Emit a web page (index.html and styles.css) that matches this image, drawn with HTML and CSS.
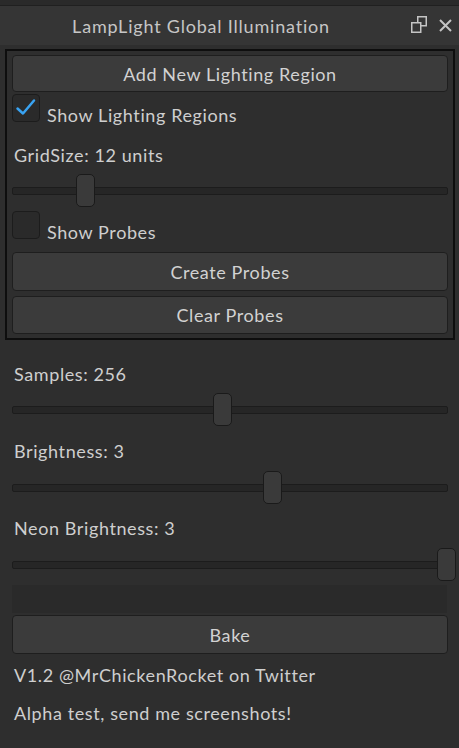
FILE: index.html
```html
<!DOCTYPE html>
<html>
<head>
<meta charset="utf-8">
<link rel="stylesheet" href="styles.css">
</head>
<body>
<div class="topstrip"></div>
<div class="titlebar">
  <div class="title">LampLight Global Illumination</div>
  <div class="icons">
    <svg class="ico-restore" width="16" height="18" viewBox="0 0 16 18">
      <rect x="6.75" y="0.75" width="8.5" height="9" fill="none" stroke="#c4c4c4" stroke-width="1.5"/>
      <rect x="0.75" y="6.75" width="9" height="9.5" fill="#353535" stroke="#c4c4c4" stroke-width="1.5"/>
    </svg>
    <svg class="ico-close" width="13" height="13" viewBox="0 0 13 13">
      <path d="M1 1 L12 12 M12 1 L1 12" stroke="#c4c4c4" stroke-width="2"/>
    </svg>
  </div>
</div>
<div class="content">
  <div class="box">
    <div class="btn btn-add">Add New Lighting Region</div>
    <div class="check-row row-regions">
      <div class="checkbox">
        <svg width="28" height="28" viewBox="0 0 28 28">
          <path d="M5.5 14.5 L11 19.5 L22 6.5" fill="none" stroke="#39a3f2" stroke-width="2.5" stroke-linecap="round" stroke-linejoin="round"/>
        </svg>
      </div>
      <span class="check-label">Show Lighting Regions</span>
    </div>
    <div class="label lbl-grid">GridSize: 12 units</div>
    <div class="slider sl-grid"><div class="track"></div><div class="thumb" style="left:64px"></div></div>
    <div class="check-row row-probes">
      <div class="checkbox"></div>
      <span class="check-label">Show Probes</span>
    </div>
    <div class="btn btn-create">Create Probes</div>
    <div class="btn btn-clear">Clear Probes</div>
  </div>
  <div class="label lbl-samples">Samples: 256</div>
  <div class="slider sl-samples"><div class="track"></div><div class="thumb" style="left:201px"></div></div>
  <div class="label lbl-bright">Brightness: 3</div>
  <div class="slider sl-bright"><div class="track"></div><div class="thumb" style="left:251px"></div></div>
  <div class="label lbl-neon">Neon Brightness: 3</div>
  <div class="slider sl-neon"><div class="track"></div><div class="thumb" style="left:425px"></div></div>
  <div class="progress"></div>
  <div class="btn btn-bake">Bake</div>
  <div class="label lbl-ver">V1.2 @MrChickenRocket on Twitter</div>
  <div class="label lbl-alpha">Alpha test, send me screenshots!</div>
</div>
</body>
</html>
```
FILE: styles.css
```css
html, body {
  margin: 0;
  padding: 0;
  background: #2e2e2e;
}
body {
  width: 459px;
  height: 748px;
  overflow: hidden;
  font-family: Lato, "Open Sans", sans-serif;
  font-size: 18px;
  letter-spacing: 0.6px;
  color: #cfcfcf;
}
.topstrip {
  height: 5px;
  background: #2a2a2a;
  border-bottom: 1px solid #202020;
}
.titlebar {
  height: 39px;
  background: #353535;
  display: flex;
  align-items: center;
}
.title {
  width: 402px;
  text-align: center;
  color: #c6c6c6;
  font-size: 18px;
  letter-spacing: 0.8px;
}
.icons {
  display: flex;
  align-items: center;
}
.ico-restore {
  margin-left: 9px;
  margin-top: -1px;
}
.ico-close {
  margin-left: 12px;
}
.content {
  padding: 4px 0 0 0;
}
.box {
  margin-left: 5px;
  width: 441px;
  border: 2px solid #0e0e0e;
  padding: 0 0 4px 5px;
}
.btn {
  box-sizing: border-box;
  width: 436px;
  background: #3b3b3b;
  border: 1px solid #1e1e1e;
  border-radius: 4px;
  display: flex;
  align-items: center;
  justify-content: center;
  color: #d2d2d2;
}
.btn-add { margin-top: 4px; height: 37px; }
.btn-create { margin-top: 13px; height: 39px; }
.btn-clear { margin-top: 5px; height: 38px; }
.check-row {
  display: flex;
  align-items: flex-end;
  height: 28px;
}
.row-regions { margin-top: 2px; }
.row-probes { margin-top: 4px; }
.checkbox {
  box-sizing: border-box;
  width: 28px;
  height: 28px;
  background: #2a2a2a;
  border: 1px solid #1c1c1c;
  border-radius: 4px;
  display: flex;
}
.checkbox svg { margin: -1px; }
.check-label {
  margin-left: 7px;
  line-height: 24px;
  margin-bottom: -5px;
}
.label {
  height: 24px;
  line-height: 24px;
  padding-left: 2px;
}
.lbl-grid { margin-top: 21px; }
.content > .label { margin-left: 12px; }
.lbl-samples { margin-top: 22px; }
.lbl-bright { margin-top: 13px; }
.lbl-neon { margin-top: 12px; }
.slider {
  position: relative;
  width: 436px;
  height: 33px;
}
.content > .slider { margin-left: 12px; }
.sl-grid { margin-top: 7px; }
.sl-samples { margin-top: 7px; }
.sl-bright { margin-top: 8px; }
.sl-neon { margin-top: 8px; }
.track {
  position: absolute;
  left: 0;
  right: 0;
  top: 13px;
  height: 8px;
  box-sizing: border-box;
  background: #262626;
  border: 1px solid #1c1c1c;
  border-radius: 2px;
}
.thumb {
  position: absolute;
  top: 0;
  width: 19px;
  height: 33px;
  box-sizing: border-box;
  background: #3a3a3a;
  border: 1px solid #1a1a1a;
  border-radius: 5px;
}
.progress {
  margin: 4px 0 0 12px;
  width: 435px;
  height: 28px;
  background: #2a2a2a;
}
.btn-bake {
  margin: 2px 0 0 12px;
  height: 39px;
}
.lbl-ver { margin-top: 9px; }
.lbl-alpha { margin-top: 14px; }
```
